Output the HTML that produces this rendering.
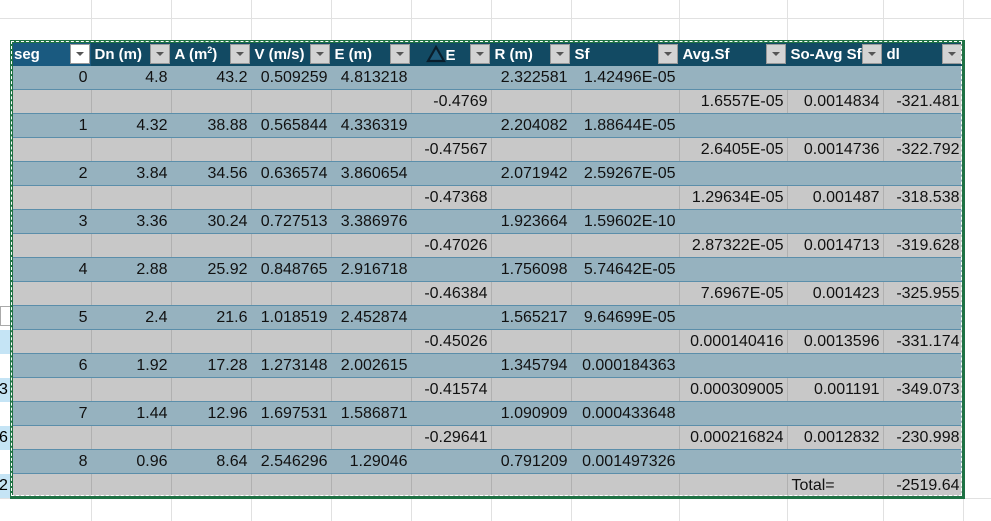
<!DOCTYPE html>
<html><head><style>
body{margin:0;width:991px;height:521px;overflow:hidden;background:#fff;position:relative;font-family:"Liberation Sans",Arial,sans-serif}
.gv{position:absolute;top:0;height:521px;width:1px;background:#e1e1e1}
.gh{position:absolute;left:0;width:991px;height:1px;background:#e1e1e1}
table{position:absolute;left:11px;top:42px;border-collapse:collapse;table-layout:fixed}
td{height:23px;padding:0 3px 0 0;text-align:right;font-size:16px;color:#111;white-space:nowrap;overflow:hidden;border-bottom:1px solid #5b8eaa;border-right:1px solid #b0b0b0}
tr.b td{background:#96b2bf;border-right-color:#96b2bf}
tr.g td{background:#c8c8c8}
tr.h td{background:#124a63;color:#fff;font-weight:bold;font-size:15px;text-align:left;padding-left:3px;position:relative;border-right:1px solid #124a63;border-bottom:none;height:24px}
.dd{position:absolute;right:1px;top:2px;width:20px;height:20px;background:#d3d3d3;border:1px solid #999;box-sizing:border-box}
.dd:after{content:"";position:absolute;left:5px;top:7px;border-left:4px solid transparent;border-right:4px solid transparent;border-top:4px solid #555}
</style></head><body>
<div class="gv" style="left:91px"></div><div class="gv" style="left:171px"></div><div class="gv" style="left:251px"></div><div class="gv" style="left:331px"></div><div class="gv" style="left:411px"></div><div class="gv" style="left:491px"></div><div class="gv" style="left:571px"></div><div class="gv" style="left:679px"></div><div class="gv" style="left:787px"></div><div class="gv" style="left:883px"></div><div class="gv" style="left:963px"></div>
<div class="gh" style="top:18px"></div><div class="gh" style="top:498px"></div>
<div style="position:absolute;left:0;top:306px;width:10px;height:18px;background:#fff;border:1px solid #aaa"></div>
<div style="position:absolute;left:0;top:330px;width:11px;height:24px;background:#c5e4f5"></div>
<div style="position:absolute;left:0;top:378px;width:11px;height:24px;background:#c5e4f5;font-size:16px;line-height:24px;overflow:hidden;text-indent:-1px">3</div>
<div style="position:absolute;left:0;top:426px;width:11px;height:24px;background:#c5e4f5;font-size:16px;line-height:24px;overflow:hidden;text-indent:-1px">6</div>
<div style="position:absolute;left:0;top:474px;width:11px;height:24px;background:#c5e4f5;font-size:16px;line-height:24px;overflow:hidden;text-indent:-1px">2</div>
<table>
<colgroup><col style="width:80px"><col style="width:80px"><col style="width:80px"><col style="width:80px"><col style="width:80px"><col style="width:80px"><col style="width:80px"><col style="width:108px"><col style="width:108px"><col style="width:96px"><col style="width:80px"></colgroup>
<tr class="h"><td style="background:#1a5a80">seg<span class="dd" style="background:#fff"></span></td><td>Dn (m)<span class="dd"></span></td><td>A (m<sup style="font-size:9px">2</sup>)<span class="dd"></span></td><td>V (m/s)<span class="dd"></span></td><td>E (m)<span class="dd"></span></td><td style="padding-left:14px"><svg width="20" height="18" viewBox="0 0 20 18" style="vertical-align:-3px"><path d="M10 2 L18 16 L2 16 Z" fill="#1e5a7a" stroke="#0a1e2c" stroke-width="2.2"/></svg>E<span class="dd"></span></td><td>R (m)<span class="dd"></span></td><td>Sf<span class="dd"></span></td><td>Avg.Sf<span class="dd"></span></td><td>So-Avg Sf<span class="dd"></span></td><td>dl<span class="dd"></span></td></tr>
<tr class="b"><td>0</td><td>4.8</td><td>43.2</td><td>0.509259</td><td>4.813218</td><td></td><td>2.322581</td><td>1.42496E-05</td><td></td><td></td><td></td></tr>
<tr class="g"><td></td><td></td><td></td><td></td><td></td><td>-0.4769</td><td></td><td></td><td>1.6557E-05</td><td>0.0014834</td><td>-321.481</td></tr>
<tr class="b"><td>1</td><td>4.32</td><td>38.88</td><td>0.565844</td><td>4.336319</td><td></td><td>2.204082</td><td>1.88644E-05</td><td></td><td></td><td></td></tr>
<tr class="g"><td></td><td></td><td></td><td></td><td></td><td>-0.47567</td><td></td><td></td><td>2.6405E-05</td><td>0.0014736</td><td>-322.792</td></tr>
<tr class="b"><td>2</td><td>3.84</td><td>34.56</td><td>0.636574</td><td>3.860654</td><td></td><td>2.071942</td><td>2.59267E-05</td><td></td><td></td><td></td></tr>
<tr class="g"><td></td><td></td><td></td><td></td><td></td><td>-0.47368</td><td></td><td></td><td>1.29634E-05</td><td>0.001487</td><td>-318.538</td></tr>
<tr class="b"><td>3</td><td>3.36</td><td>30.24</td><td>0.727513</td><td>3.386976</td><td></td><td>1.923664</td><td>1.59602E-10</td><td></td><td></td><td></td></tr>
<tr class="g"><td></td><td></td><td></td><td></td><td></td><td>-0.47026</td><td></td><td></td><td>2.87322E-05</td><td>0.0014713</td><td>-319.628</td></tr>
<tr class="b"><td>4</td><td>2.88</td><td>25.92</td><td>0.848765</td><td>2.916718</td><td></td><td>1.756098</td><td>5.74642E-05</td><td></td><td></td><td></td></tr>
<tr class="g"><td></td><td></td><td></td><td></td><td></td><td>-0.46384</td><td></td><td></td><td>7.6967E-05</td><td>0.001423</td><td>-325.955</td></tr>
<tr class="b"><td>5</td><td>2.4</td><td>21.6</td><td>1.018519</td><td>2.452874</td><td></td><td>1.565217</td><td>9.64699E-05</td><td></td><td></td><td></td></tr>
<tr class="g"><td></td><td></td><td></td><td></td><td></td><td>-0.45026</td><td></td><td></td><td>0.000140416</td><td>0.0013596</td><td>-331.174</td></tr>
<tr class="b"><td>6</td><td>1.92</td><td>17.28</td><td>1.273148</td><td>2.002615</td><td></td><td>1.345794</td><td>0.000184363</td><td></td><td></td><td></td></tr>
<tr class="g"><td></td><td></td><td></td><td></td><td></td><td>-0.41574</td><td></td><td></td><td>0.000309005</td><td>0.001191</td><td>-349.073</td></tr>
<tr class="b"><td>7</td><td>1.44</td><td>12.96</td><td>1.697531</td><td>1.586871</td><td></td><td>1.090909</td><td>0.000433648</td><td></td><td></td><td></td></tr>
<tr class="g"><td></td><td></td><td></td><td></td><td></td><td>-0.29641</td><td></td><td></td><td>0.000216824</td><td>0.0012832</td><td>-230.998</td></tr>
<tr class="b"><td>8</td><td>0.96</td><td>8.64</td><td>2.546296</td><td>1.29046</td><td></td><td>0.791209</td><td>0.001497326</td><td></td><td></td><td></td></tr>
<tr class="g"><td></td><td></td><td></td><td></td><td></td><td></td><td></td><td></td><td></td><td style="text-align:left;padding-left:4px">Total=</td><td>-2519.64</td></tr>
</table>
<div style="position:absolute;left:10px;top:40px;width:949px;height:453px;border:3px solid #1f7244"></div>
<div style="position:absolute;left:11px;top:41px;width:949px;height:453px;border:1px dashed #fff"></div>
</body></html>
